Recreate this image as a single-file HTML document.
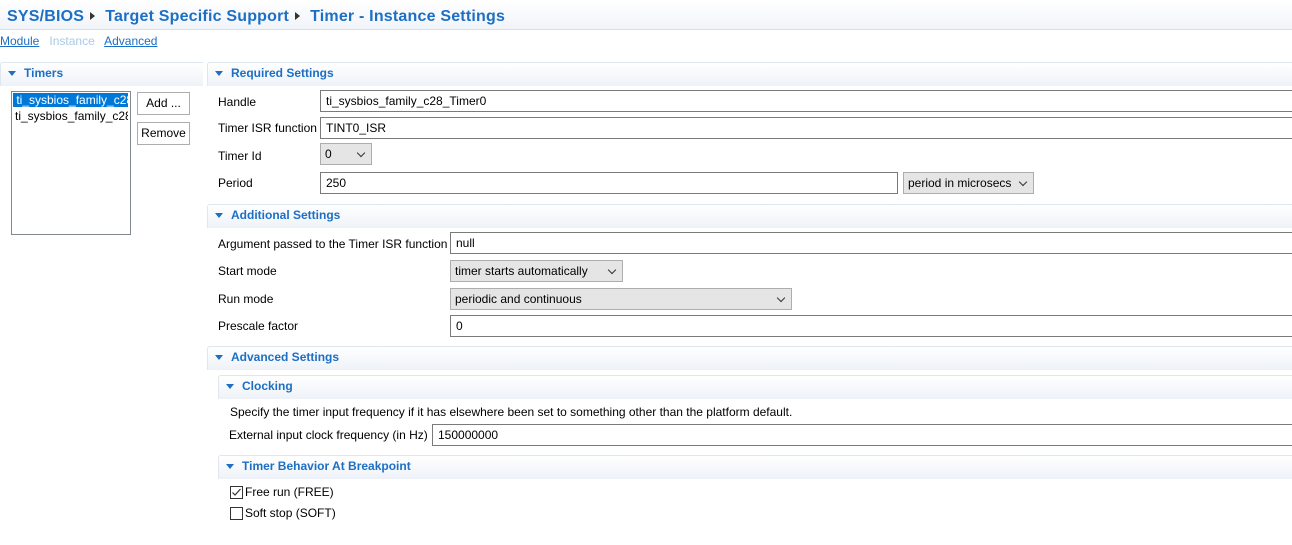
<!DOCTYPE html><html><head><style>
body{margin:0;width:1292px;height:545px;background:#fff;font-family:"Liberation Sans",sans-serif;font-size:12px;color:#000;position:relative;overflow:hidden}
.a{position:absolute;white-space:nowrap}
.hdr{position:absolute;height:23px;background:linear-gradient(#fff,#eef2f8);border-top:1px solid #dfe6ef;border-left:1px solid #dfe6ef;border-radius:3px 0 0 0;color:#1c6fc4;font-weight:bold;font-size:12px;line-height:21px}
.hdr:before{content:"";display:inline-block;width:0;height:0;border-left:4px solid transparent;border-right:4px solid transparent;border-top:5px solid #1c6fc4;margin:0 8px 1px 7px;vertical-align:middle}
.in{position:absolute;border:1px solid #7a7a7a;background:#fff;line-height:20px;padding-left:5px;box-sizing:border-box;height:22px}
.sel{position:absolute;border:1px solid #adadad;background:#e5e5e5;box-sizing:border-box;height:22px;line-height:20px;padding-left:4px}
.sel:after{content:"";position:absolute;right:7px;top:6px;width:5px;height:5px;border-right:1px solid #333;border-bottom:1px solid #333;transform:rotate(45deg)}
.btn{position:absolute;border:1px solid #adadad;background:#fff;box-sizing:border-box;text-align:center;line-height:20px}
.cb{position:absolute;width:11px;height:11px;border:1px solid #333;background:#fff}
.tri{display:inline-block;width:0;height:0;border-top:4px solid transparent;border-bottom:4px solid transparent;border-left:5px solid #333;margin:0 10px 2px 6px;vertical-align:middle}
</style></head><body>
<div class="a" style="left:0;top:0;width:1292px;height:29px;background:linear-gradient(#fff,#f1f4f9);border-bottom:1px solid #d7dfea"></div>
<div class="a" style="left:7px;top:8px;font-size:16px;font-weight:bold;color:#1c6fc4;letter-spacing:0.2px">SYS/BIOS<span class="tri"></span>Target Specific Support<span class="tri"></span>Timer - Instance Settings</div>
<div class="a" style="left:0;top:34px;color:#1c6fc4"><u>Module</u>&nbsp;&nbsp; <span style="color:#aac8e8">Instance</span>&nbsp;&nbsp; <u>Advanced</u></div>

<div class="hdr" style="left:0;top:62px;width:202px">Timers</div>
<div class="a" style="left:11px;top:91px;width:118px;height:142px;border:1px solid #828790"></div>
<div class="a" style="left:13px;top:93px;width:115px;height:14px;background:#0078d7;color:#fff;line-height:14px;overflow:hidden">&nbsp;ti_sysbios_family_c28_</div>
<div class="a" style="left:15px;top:109px;width:113px;overflow:hidden">ti_sysbios_family_c28_</div>
<div class="btn" style="left:137px;top:92px;width:53px;height:23px">Add ...</div>
<div class="btn" style="left:137px;top:122px;width:53px;height:23px">Remove</div>

<div class="hdr" style="left:207px;top:62px;width:1085px">Required Settings</div>
<div class="a" style="left:218px;top:95px">Handle</div><div class="in" style="left:320px;top:90px;width:980px">ti_sysbios_family_c28_Timer0</div>
<div class="a" style="left:218px;top:121px">Timer ISR function</div><div class="in" style="left:320px;top:117px;width:980px">TINT0_ISR</div>
<div class="a" style="left:218px;top:149px">Timer Id</div><div class="sel" style="left:320px;top:143px;width:52px">0</div>
<div class="a" style="left:218px;top:176px">Period</div><div class="in" style="left:320px;top:172px;width:578px">250</div><div class="sel" style="left:903px;top:172px;width:131px">period in microsecs</div>

<div class="hdr" style="left:207px;top:204px;width:1085px">Additional Settings</div>
<div class="a" style="left:218px;top:237px">Argument passed to the Timer ISR function</div><div class="in" style="left:450px;top:232px;width:850px">null</div>
<div class="a" style="left:218px;top:264px">Start mode</div><div class="sel" style="left:450px;top:260px;width:173px">timer starts automatically</div>
<div class="a" style="left:218px;top:292px">Run mode</div><div class="sel" style="left:450px;top:288px;width:342px">periodic and continuous</div>
<div class="a" style="left:218px;top:319px">Prescale factor</div><div class="in" style="left:450px;top:315px;width:850px">0</div>

<div class="hdr" style="left:207px;top:346px;width:1085px">Advanced Settings</div>
<div class="hdr" style="left:218px;top:375px;width:1074px">Clocking</div>
<div class="a" style="left:230px;top:405px">Specify the timer input frequency if it has elsewhere been set to something other than the platform default.</div>
<div class="a" style="left:229px;top:428px">External input clock frequency (in Hz)</div><div class="in" style="left:432px;top:424px;width:870px">150000000</div>
<div class="hdr" style="left:218px;top:455px;width:1074px">Timer Behavior At Breakpoint</div>
<div class="cb" style="left:230px;top:486px"></div>
<svg class="a" style="left:230px;top:486px" width="13" height="13"><path d="M2.5 6.5 L5 9 L10.5 3" fill="none" stroke="#333" stroke-width="1.2"/></svg>
<div class="a" style="left:245px;top:485px">Free run (FREE)</div>
<div class="cb" style="left:230px;top:507px"></div><div class="a" style="left:245px;top:506px">Soft stop (SOFT)</div>
</body></html>
